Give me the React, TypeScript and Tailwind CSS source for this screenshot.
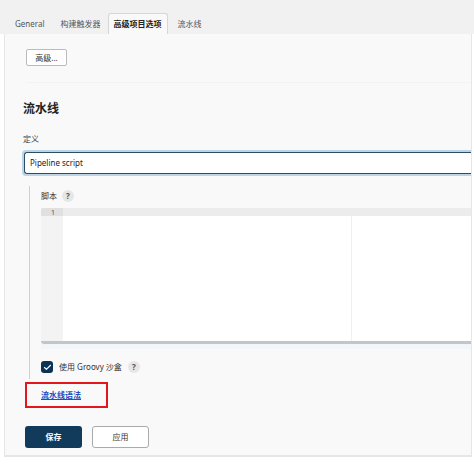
import { Check } from 'lucide-react';

const font = { fontFamily: '"Noto Sans", "Noto Sans CJK SC", sans-serif' };

function Help() {
  return (
    <span className="inline-flex h-[12px] w-[12px] items-center justify-center rounded-full bg-[#e6e6e6] text-[8px] font-bold leading-none text-[#555]">
      ?
    </span>
  );
}

export default function App() {
  return (
    <div className="h-[475px] w-[474px] overflow-hidden bg-white" style={font}>
      {/* tab bar */}
      <div className="flex h-[34px] items-end bg-[#f1f1f1] pl-[6px]">
        <div className="flex h-[20px] items-center px-[9px] text-[8px] text-[#555]">General</div>
        <div className="flex h-[20px] items-center px-[7px] text-[8px] text-[#555]">构建触发器</div>
        <div className="flex h-[21px] items-center rounded-t-[3px] border border-b-0 border-[#d6d6d6] bg-[#f9f9f9] px-[5px] text-[8px] font-semibold text-[#222]">
          高级项目选项
        </div>
        <div className="flex h-[20px] items-center px-[10px] text-[8px] text-[#555]">流水线</div>
      </div>

      {/* panel */}
      <div className="ml-[4px] mr-[2px] h-[423px] border-b-2 border-l border-r border-[#e6e6e6] bg-[#f9f9f9]">
        <div className="pl-[21px] pt-[15px]">
          <button className="flex h-[17px] w-[41px] items-center justify-center rounded-[2px] border border-[#bbb] bg-white text-[8px] text-[#333]">
            高级...
          </button>
        </div>
        <div className="ml-[21px] mt-[16px] border-t border-[#f3f3f3]" />

        <div className="pl-[18px] pt-[17px] text-[12px] font-bold text-[#222]">流水线</div>
        <div className="pl-[18px] pt-[15px] text-[8px] text-[#444]">定义</div>

        <div className="ml-[17px] mt-[5px] rounded-l-[4px] border-y-[2px] border-l-[2px] border-[#bcd5e6] ">
          <div className="flex h-[22px] items-center rounded-l-[3px] border-y border-l border-[#2c4e66] bg-white pl-[5px] text-[8px] text-[#222]">
            Pipeline script
          </div>
        </div>

        {/* nested */}
        <div className="ml-[24px] mt-[10px] border-l border-[#d0d0d0] pb-[4px] pl-[11px] pt-[4px]">
          <div className="flex items-center gap-[5px] text-[8px] text-[#333]">
            <span>脚本</span>
            <Help />
          </div>
          <div className="mt-[6px] flex h-[136px] flex-col rounded-bl-[3px] border-b-[3px] border-[#c2c6ca] bg-white">
            <div className="flex h-[8px] bg-[#ececec]">
              <div className="flex w-[22px] items-center justify-end rounded-tl-[3px] bg-[#e0e0e0] pr-[8px] text-[7px] leading-none text-[#555]">
                1
              </div>
            </div>
            <div className="flex flex-1">
              <div className="w-[22px] bg-[#f3f3f3]" />
              <div className="w-[288px]" />
              <div className="w-px bg-[#f0f0f0]" />
              <div className="flex-1" />
            </div>
          </div>
          <div className="h-[5px] bg-[#f1f6fb]" />

          <div className="mt-[12px] flex items-center gap-[6px] pb-[2px]">
            <span className="flex h-[12px] w-[12px] items-center justify-center rounded-[3px] bg-[#0d3354]">
              <Check className="h-[9px] w-[9px] text-white" strokeWidth={3} />
            </span>
            <span className="text-[8px] text-[#333]">使用 Groovy 沙盒</span>
            <Help />
          </div>
        </div>

        <div className="ml-[20px] mt-[3px] flex h-[26px] w-[83px] items-center border-2 border-[#e3161c] pl-[14px]">
          <span className="text-[8px] font-semibold text-[#1d4fc4] underline">流水线语法</span>
        </div>

        <div className="ml-[20px] mt-[18px] flex gap-[10px]">
          <button className="flex h-[22px] w-[57px] items-center justify-center rounded-[3px] bg-[#123a5a] text-[8px] font-bold text-white">
            保存
          </button>
          <button className="flex h-[22px] w-[57px] items-center justify-center rounded-[3px] border border-[#aaa] bg-white text-[8px] text-[#333]">
            应用
          </button>
        </div>
      </div>
    </div>
  );
}
